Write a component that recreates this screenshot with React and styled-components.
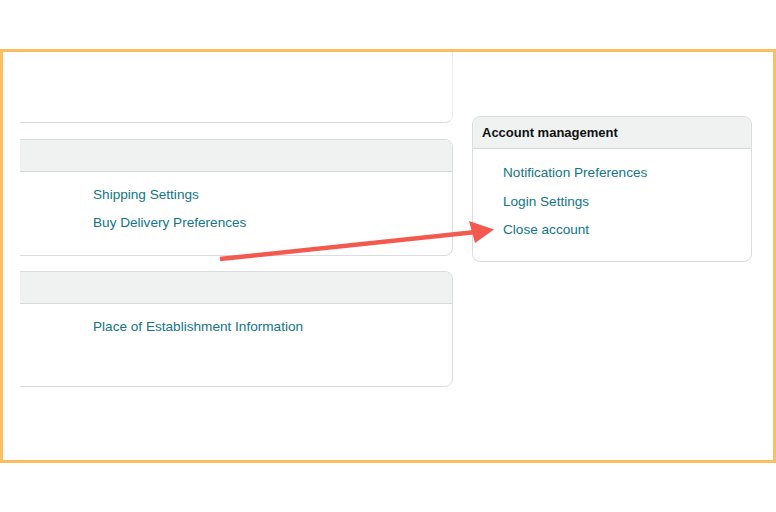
import React from "react";
import styled, { createGlobalStyle } from "styled-components";

const Global = createGlobalStyle`
  html, body { margin: 0; padding: 0; background: #fff; }
  body { font-family: "Liberation Sans", Arial, sans-serif; }
`;

const Page = styled.div`
  position: relative;
  width: 776px;
  height: 512px;
  padding-top: 49px;
  box-sizing: border-box;
`;

const Frame = styled.div`
  height: 414px;
  box-sizing: border-box;
  border: 3px solid #fdbd61;
  overflow: hidden;
  display: grid;
  grid-template-columns: 433px 280px;
  column-gap: 19px;
  padding-left: 17px;
  align-items: start;
`;

const LeftColumn = styled.div`
  overflow: hidden;
  display: flex;
  flex-direction: column;
  gap: 16px;
  padding-bottom: 4px;
`;

const Card = styled.div`
  background: #fff;
  border: 1px solid #d9dddd;
  border-right-color: ${(p) => (p.$faded ? "#eef0f0" : "#d9dddd")};
  border-radius: 8px;
  box-sizing: border-box;
  margin-left: ${(p) => (p.$clipped ? "-12px" : "0")};
  margin-top: ${(p) => p.$top || "0"};
  width: ${(p) => (p.$clipped ? "445px" : "auto")};
  height: ${(p) => p.$h || "auto"};
  overflow: hidden;
`;

const CardHeader = styled.div`
  height: 32px;
  box-sizing: border-box;
  background: #f0f2f2;
  border-bottom: 1px solid #d5d9d9;
  padding: 0 9px;
  display: flex;
  align-items: center;
  font-size: 13px;
  font-weight: 700;
  color: #0f1111;
`;

const LinkList = styled.div`
  display: flex;
  flex-direction: column;
  gap: ${(p) => p.$gap || "8px"};
  padding: ${(p) => p.$top || "13px"} 0 0 ${(p) => p.$indent};
`;

const Link = styled.a`
  display: block;
  font-size: 13.6px;
  line-height: 20px;
  color: #127685;
  text-decoration: none;
`;

const RightColumn = styled.div`
  margin-top: 64px;
`;

const ArrowLayer = styled.svg`
  position: absolute;
  left: 0;
  top: 0;
  pointer-events: none;
`;

export default function App() {
  return (
    <Page>
      <Global />
      <Frame>
        <LeftColumn>
          <Card $clipped $faded $top="-30px" $h="101px" />
          <Card $clipped $h="117px">
            <CardHeader />
            <LinkList $indent="84px">
              <Link>Shipping Settings</Link>
              <Link>Buy Delivery Preferences</Link>
            </LinkList>
          </Card>
          <Card $clipped $h="116px" $top="-1px">
            <CardHeader />
            <LinkList $indent="84px">
              <Link>Place of Establishment Information</Link>
            </LinkList>
          </Card>
        </LeftColumn>
        <RightColumn>
          <Card $h="146px">
            <CardHeader>Account management</CardHeader>
            <LinkList $indent="30px" $top="14px" $gap="8.5px">
              <Link>Notification Preferences</Link>
              <Link>Login Settings</Link>
              <Link>Close account</Link>
            </LinkList>
          </Card>
        </RightColumn>
      </Frame>
      <ArrowLayer width="776" height="512" viewBox="0 0 776 512">
        <line x1="220" y1="259" x2="476" y2="232" stroke="#f4594f" strokeWidth="4.5" strokeLinecap="butt" />
        <polygon points="469,221 494,229.5 475,243" fill="#f4594f" />
      </ArrowLayer>
    </Page>
  );
}
